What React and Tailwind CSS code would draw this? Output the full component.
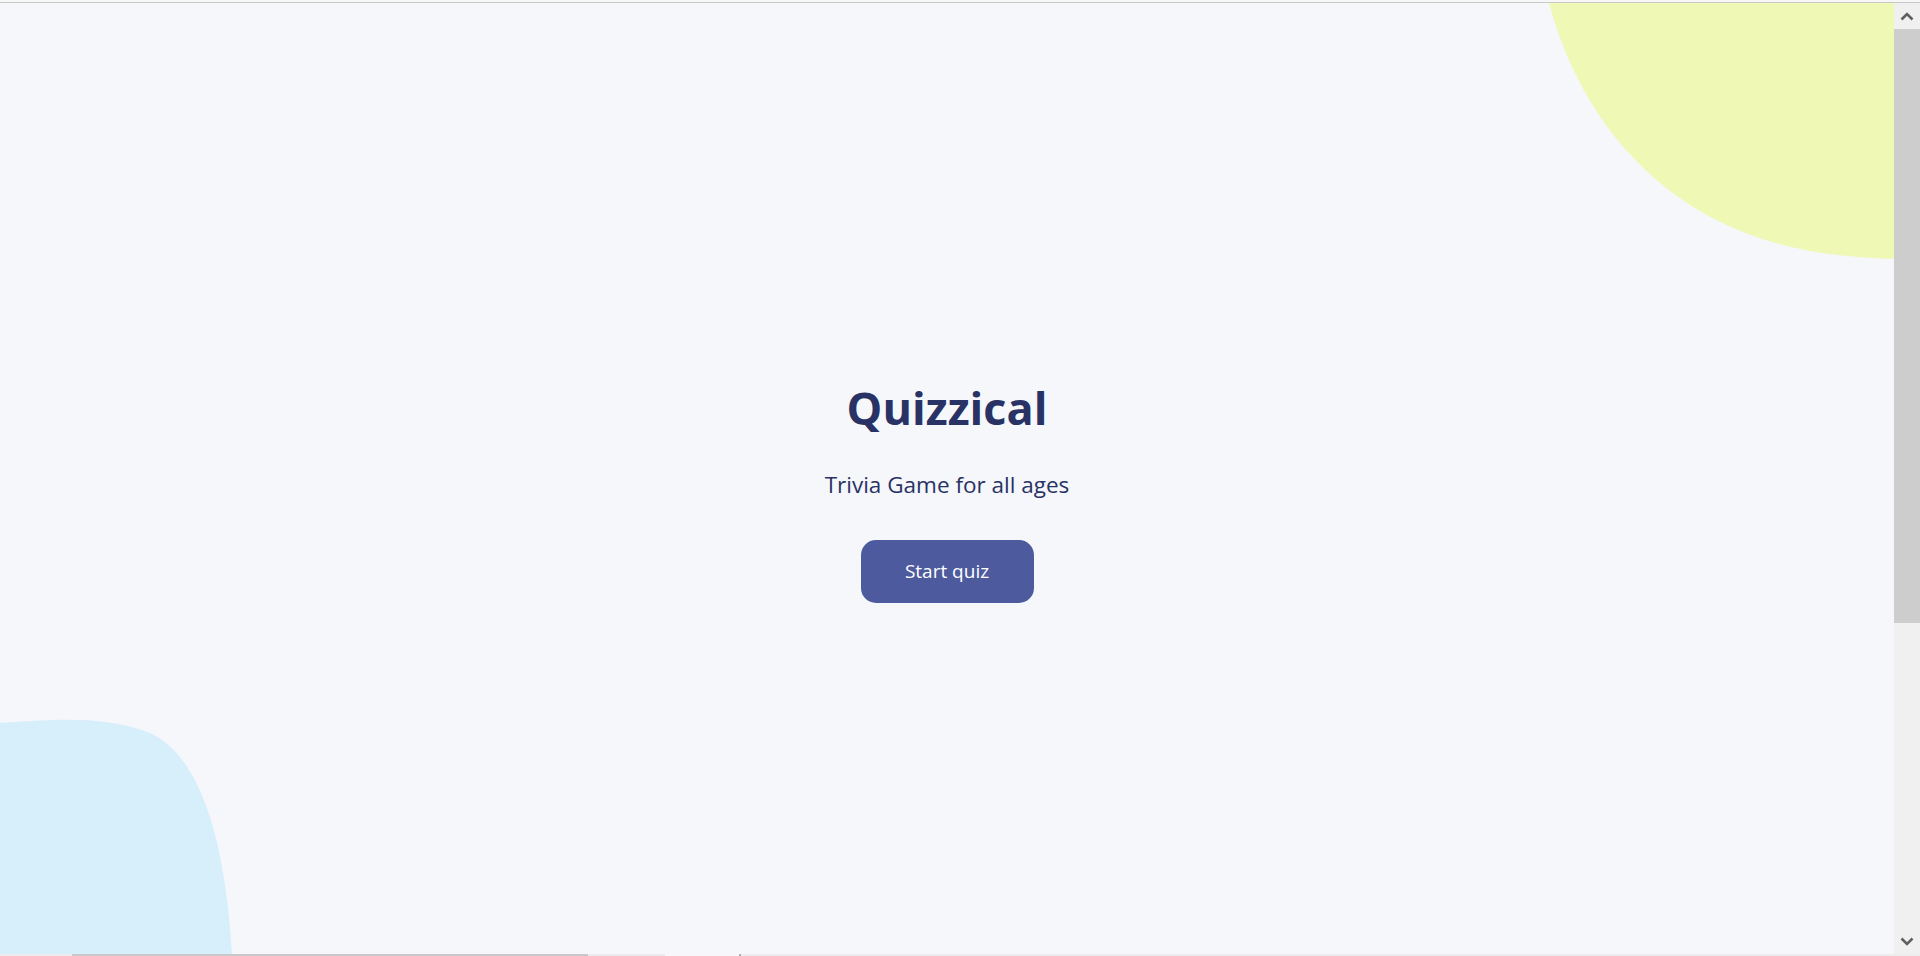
import React from 'react';

const font = { fontFamily: '"Open Sans", "Noto Sans", sans-serif' };

// corner decorations
const YellowBlob = () => (
  <svg className="absolute top-0 right-0" width="345" height="257" viewBox="0 0 345 257">
    <path d="M0 0 L345 0 L345 256 C 290 254 250 248 210 235 C 120 205 35 130 0 0 Z" fill="#f0f8b6" />
  </svg>
);

const BlueBlob = () => (
  <svg className="absolute bottom-0 left-0" width="236" height="236" viewBox="0 0 236 236">
    <path d="M0 236 L0 5 C 40 3 100 -5 150 15 C 200 38 225 120 232 236 Z" fill="#d7eefb" />
  </svg>
);

const Chevron = ({ down }) => (
  <svg width="14" height="9" viewBox="0 0 14 9" className={down ? 'rotate-180' : ''}>
    <path d="M1.5 7.5 L7 2 L12.5 7.5" fill="none" stroke="#606060" strokeWidth="2.6" />
  </svg>
);

const VScrollbar = () => (
  <div className="w-[26px] shrink-0 flex flex-col bg-[#f0f0f0]">
    <div className="h-[26px] flex items-center justify-center">
      <Chevron />
    </div>
    <div className="h-[594px] bg-[#cdcdcd]" />
    <div className="flex-1" />
    <div className="h-[26px] flex items-center justify-center">
      <Chevron down />
    </div>
  </div>
);

export default function App() {
  return (
    <div className="h-screen w-full flex flex-col overflow-hidden bg-[#f5f7fb]" style={font}>
      <div className="h-[2px] bg-[#f7f7f7]" />
      <div className="h-px bg-[#c9c9c9]" />
      <div className="flex-1 flex min-h-0">
        <main className="relative flex-1 flex flex-col items-center justify-center pt-[31px]">
          <YellowBlob />
          <BlueBlob />
          <h1 className="relative text-[45px] font-bold leading-none text-[#293264]">Quizzical</h1>
          <p className="relative mt-[38px] text-[22.5px] leading-[34px] text-[#293264]">Trivia Game for all ages</p>
          <button className="relative mt-[38px] w-[173px] h-[63px] rounded-[15px] bg-[#4d5b9e] text-white text-[19px]">
            Start quiz
          </button>
        </main>
        <VScrollbar />
      </div>
      <div className="h-[2px] flex bg-[#ededed]">
        <div className="w-[72px]" />
        <div className="w-[516px] bg-[#c8c8c8]" />
        <div className="w-[77px] bg-[#ebebeb]" />
        <div className="w-[74px] bg-[#f7f7f7]" />
        <div className="w-[2px] bg-[#b0b0b0]" />
        <div className="flex-1" />
      </div>
    </div>
  );
}
